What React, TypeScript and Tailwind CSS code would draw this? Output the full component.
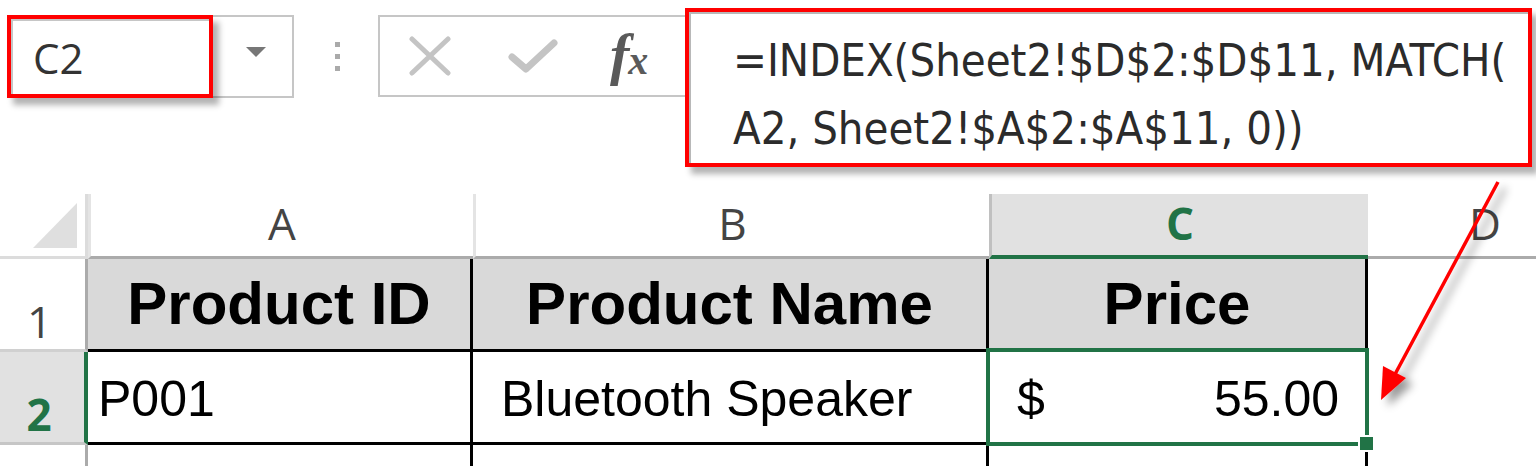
import React from "react";

const ui = { fontFamily: '"Open Sans", "Noto Sans", sans-serif' };
const cellFont = { fontFamily: '"Liberation Sans", Arial, sans-serif' };
const formulaFont = {
  fontFamily: '"Liberation Sans Narrow", "DejaVu Sans Condensed", "Liberation Sans", sans-serif',
};

function NameBox() {
  return (
    <div className="ml-[7px] mt-[15px] flex h-[83px] w-[287px]">
      <div className="relative z-10 flex w-[206px] items-center border-[4px] border-[#ff0000] bg-white shadow-[6px_7px_6px_rgba(0,0,0,0.3)]">
        <div className="flex h-full w-full items-center border-l-2 border-t-2 border-[#c6c6c6] pl-[20px]">
          <span style={ui} className="text-[42px] leading-none text-[#333]">
            C2
          </span>
        </div>
      </div>
      <div className="flex flex-1 items-center justify-center border-y-2 border-r-2 border-[#c6c6c6] pb-[10px] pl-[6px]">
        <svg width="22" height="12" viewBox="0 0 22 12">
          <polygon points="1,1 21,1 11,11" fill="#777" />
        </svg>
      </div>
    </div>
  );
}

function Dots() {
  return (
    <div className="ml-[41px] mt-[42px] flex flex-col gap-[7px]">
      <div className="h-[5px] w-[5px] bg-[#aaa]" />
      <div className="h-[5px] w-[5px] bg-[#aaa]" />
      <div className="h-[5px] w-[5px] bg-[#aaa]" />
    </div>
  );
}

function FormulaButtons() {
  return (
    <div className="ml-[38px] mt-[15px] flex h-[82px] w-[307px] items-center border-2 border-r-0 border-[#c6c6c6] pl-[28px]">
      <svg width="44" height="40" viewBox="0 0 44 40">
        <path d="M4 3 L40 37 M40 3 L4 37" stroke="#c4c4c4" strokeWidth="5" strokeLinecap="round" />
      </svg>
      <svg className="ml-[56px]" width="50" height="42" viewBox="0 0 50 42">
        <path d="M4 22 L18 34 L46 8" stroke="#c4c4c4" strokeWidth="7" fill="none" strokeLinecap="round" strokeLinejoin="round" />
      </svg>
      <span
        className="ml-[52px] -mt-[2px] text-[58px] font-bold italic leading-none tracking-[-1px] text-[#5a5a5a]"
        style={{ fontFamily: '"Liberation Serif", "DejaVu Serif", serif' }}
      >
        f<span className="text-[40px]">x</span>
      </span>
    </div>
  );
}

function FormulaBar() {
  return (
    <div className="mt-[8px] h-[159px] w-[847px] border-[4px] border-[#ff0000] bg-white shadow-[6px_7px_6px_rgba(0,0,0,0.3)]">
      <div className="h-full w-full border-l-2 border-t-2 border-[#b8b8b8] pl-[42px] pt-[13px]">
        <p style={formulaFont} className="text-[45px] leading-[68px] text-[#2b2b2b]">
          =INDEX(Sheet2!$D$2:$D$11, MATCH(
          <br />
          A2, Sheet2!$A$2:$A$11, 0))
        </p>
      </div>
    </div>
  );
}

function ColHead({ label, active = false }: { label: string; active?: boolean }) {
  return (
    <div
      style={ui}
      className={
        active
          ? "flex items-center justify-center border-b-[4px] border-l-[3px] border-b-[#217346] border-l-[#c0c0c0] bg-[#e1e1e1] text-[44px] font-bold leading-none text-[#217346]"
          : "flex items-center justify-center border-b-[3px] border-l-[3px] border-b-[#ababab] border-l-[#e4e4e4] text-[44px] leading-none text-[#444]"
      }
    >
      <span className="-mt-[4px]">{label}</span>
    </div>
  );
}

function RowHead({ label, active = false }: { label: string; active?: boolean }) {
  return (
    <div
      style={ui}
      className={
        active
          ? "flex items-end justify-center border-b-[3px] border-r-[4px] border-b-[#c6c6c6] border-r-[#217346] bg-[#e1e1e1] pb-[6px] pr-[6px] text-[44px] font-bold leading-none text-[#217346]"
          : "flex items-end justify-center border-b-[3px] border-r-[3px] border-b-[#d0d0d0] border-r-[#ababab] pb-[6px] pr-[6px] text-[44px] leading-none text-[#444]"
      }
    >
      {label}
    </div>
  );
}

export default function App() {
  return (
    <div className="relative h-[466px] w-[1536px] overflow-hidden bg-white">
      <div className="flex h-[194px] items-start">
        <NameBox />
        <Dots />
        <FormulaButtons />
        <FormulaBar />
      </div>

      <div className="grid grid-cols-[88px_385px_516px_379px_234px] grid-rows-[65px_93px_93px_21px]">
        {/* column headers */}
        <div className="flex items-end justify-end border-b-[3px] border-r-[3px] border-b-[#dcdcdc] border-r-[#dcdcdc] pb-[8px] pr-[8px]">
          <svg width="44" height="45" viewBox="0 0 44 45">
            <polygon points="44,0 44,45 0,45" fill="#dfdfdf" />
          </svg>
        </div>
        <ColHead label="A" />
        <ColHead label="B" />
        <ColHead label="C" active />
        <div style={ui} className="flex items-center justify-center border-b-[3px] border-b-[#ababab] text-[44px] leading-none text-[#444]">
          <span className="-mt-[4px]">D</span>
        </div>

        {/* row 1 */}
        <RowHead label="1" />
        <div style={cellFont} className="flex items-center justify-center border-b-[3px] border-r-[3px] border-b-black border-r-black bg-[#d9d9d9] text-[60px] font-bold text-black">
          Product ID
        </div>
        <div style={cellFont} className="flex items-center justify-center border-b-[3px] border-r-[3px] border-b-black border-r-black bg-[#d9d9d9] text-[60px] font-bold text-black">
          Product Name
        </div>
        <div style={cellFont} className="flex items-center justify-center border-b-[3px] border-r-[3px] border-b-black border-r-black bg-[#d9d9d9] text-[60px] font-bold text-black">
          Price
        </div>
        <div />

        {/* row 2 */}
        <RowHead label="2" active />
        <div style={cellFont} className="flex items-center border-b-[3px] border-r-[3px] border-black pl-[10px] pt-[4px] text-[50px] text-black">
          P001
        </div>
        <div style={cellFont} className="flex items-center border-b-[3px] border-r-[3px] border-black pl-[28px] pt-[4px] text-[50px] text-black">
          Bluetooth Speaker
        </div>
        <div style={cellFont} className="relative flex items-center justify-between border-b-[3px] border-r-[3px] border-black pl-[28px] pr-[26px] pt-[4px] text-[50px] text-black">
          <span>$</span>
          <span>55.00</span>
          <div className="pointer-events-none absolute -left-[3px] -top-[4px] bottom-[-4px] right-[-4px] border-[4px] border-[#217346]" />
          <div className="absolute -bottom-[10px] -right-[10px] h-[17px] w-[17px] border-2 border-white bg-[#217346]" />
        </div>
        <div />

        {/* row 3 */}
        <div className="border-r-[3px] border-[#ababab]" />
        <div className="border-r-[3px] border-black" />
        <div className="border-r-[3px] border-black" />
        <div className="border-r-[3px] border-black" />
        <div />
      </div>

      {/* annotation arrow */}
      <svg className="pointer-events-none absolute left-0 top-0" width="1536" height="466" viewBox="0 0 1536 466">
        <defs>
          <filter id="sh" x="-20%" y="-20%" width="140%" height="140%">
            <feDropShadow dx="7" dy="6" stdDeviation="4" floodColor="#000" floodOpacity="0.4" />
          </filter>
        </defs>
        <g filter="url(#sh)">
          <line x1="1498" y1="182" x2="1393" y2="378" stroke="#ff0000" strokeWidth="3.5" />
          <polygon points="1381,400 1383,366 1406,378" fill="#ff0000" />
        </g>
      </svg>
    </div>
  );
}
